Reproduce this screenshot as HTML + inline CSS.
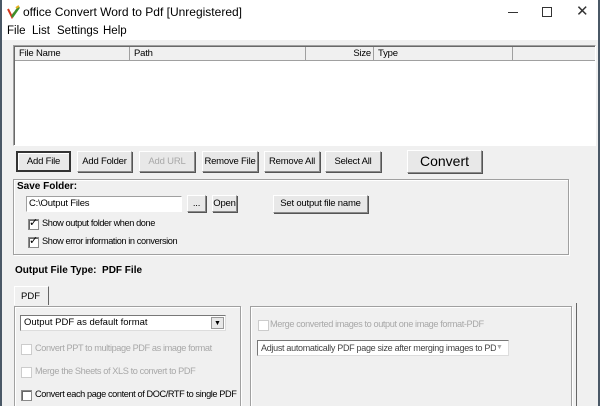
<!DOCTYPE html><html><head><style>
*{margin:0;padding:0;box-sizing:border-box}
html,body{width:600px;height:406px;overflow:hidden}
body{background:#f0f0f0;font-family:"Liberation Sans",sans-serif;font-size:9.5px;color:#000;position:relative;white-space:nowrap}
.a{position:absolute}
.btn{position:absolute;background:#e8e8e8;border:1px solid;border-color:#fff #8a8a8a #8a8a8a #fff;box-shadow:1px 1px 0 #555;text-align:center;font-size:9.5px;line-height:19px;letter-spacing:-0.2px;white-space:nowrap;overflow:hidden}
.grp{position:absolute;border:1px solid #a0a0a0;box-shadow:inset 1px 1px 0 #fff,1px 1px 0 #fff}
.cb{position:absolute;width:11px;height:11px;border:1px solid #8a8a8a;background:#fff;box-shadow:inset 1px 1px 0 #666}
.cbt{position:absolute;font-size:9.2px;letter-spacing:-0.4px}
.dis{color:#a8a8a8}
.hd{position:absolute;top:0;height:14px;border-right:1px solid #a0a0a0;font-size:9.5px;line-height:14px;padding-left:4px;letter-spacing:-0.2px}
</style></head><body>
<div class="a" style="left:0;top:0;width:600px;height:40px;background:#fff"></div>
<div class="a" style="left:0;top:0;width:2px;height:406px;background:#4a5866"></div>
<div class="a" style="left:598px;top:0;width:2px;height:406px;background:#4a5866"></div>
<svg class="a" style="left:7px;top:5px" width="14" height="14"><path d="M1 4 L5 12 L7 8" stroke="#d4381c" stroke-width="2" fill="none"/><path d="M5 12 L12 2" stroke="#3f8f2a" stroke-width="2.5" fill="none"/><path d="M9 3 L12 1" stroke="#e8b020" stroke-width="2"/></svg>
<div class="a" style="left:23px;top:5px;font-size:12px">office Convert Word to Pdf [Unregistered]</div>
<div class="a" style="left:508px;top:12px;width:10px;height:1px;background:#333"></div>
<div class="a" style="left:542px;top:7px;width:10px;height:10px;border:1px solid #333"></div>
<div class="a" style="left:576px;top:2px;font-size:15px;color:#333">✕</div>
<div class="a" style="left:7px;top:25px;font-size:11.5px">File</div>
<div class="a" style="left:32px;top:25px;font-size:11.5px">List</div>
<div class="a" style="left:57px;top:25px;font-size:11.5px">Settings</div>
<div class="a" style="left:103px;top:25px;font-size:11.5px">Help</div>
<div class="a" style="left:13px;top:45px;width:583px;height:101px;background:#fff;border:1px solid;border-color:#a0a0a0 #fff #fff #a0a0a0;box-shadow:inset 1px 1px 0 #696969">
<div class="a" style="left:1px;top:1px;width:580px;height:14px;background:#f0f0f0;border-bottom:1px solid #a0a0a0">
<div class="hd" style="left:0;width:115px">File Name</div>
<div class="hd" style="left:115px;width:176px">Path</div>
<div class="hd" style="left:291px;width:68px;text-align:right;padding-right:2px">Size</div>
<div class="hd" style="left:359px;width:139px">Type</div>
</div></div>
<div class="btn" style="left:16px;top:151px;width:55px;height:21px;border:2px solid #333;line-height:17px;box-shadow:inset 1px 1px 0 #fff">Add File</div>
<div class="btn" style="left:77px;top:151px;width:55px;height:21px">Add Folder</div>
<div class="btn dis" style="left:139px;top:151px;width:56px;height:21px">Add URL</div>
<div class="btn" style="left:202px;top:151px;width:56px;height:21px">Remove File</div>
<div class="btn" style="left:264px;top:151px;width:56px;height:21px">Remove All</div>
<div class="btn" style="left:325px;top:151px;width:56px;height:21px">Select All</div>
<div class="btn" style="left:407px;top:150px;width:75px;height:23px;font-size:14px;line-height:21px;letter-spacing:0">Convert</div>
<div class="grp" style="left:13px;top:179px;width:556px;height:76px"></div>
<div class="a" style="left:17px;top:181px;font-weight:bold;font-size:10px">Save Folder:</div>
<div class="a" style="left:26px;top:196px;width:156px;height:16px;background:#fff;border:1px solid;border-color:#a0a0a0 #fff #fff #a0a0a0;font-size:9.5px;padding-left:2px;line-height:14px;letter-spacing:-0.2px">C:\Output Files</div>
<div class="btn" style="left:187px;top:195px;width:19px;height:17px;line-height:15px">...</div>
<div class="btn" style="left:212px;top:195px;width:25px;height:17px;line-height:15px">Open</div>
<div class="btn" style="left:273px;top:195px;width:95px;height:18px;line-height:16px">Set output file name</div>
<div class="cb" style="left:28px;top:219px"></div><div class="a" style="left:29px;top:216px;font-size:11px">✓</div>
<div class="cbt" style="left:42px;top:218px">Show output folder when done</div>
<div class="cb" style="left:28px;top:237px"></div><div class="a" style="left:29px;top:234px;font-size:11px">✓</div>
<div class="cbt" style="left:42px;top:236px">Show error information in conversion</div>
<div class="a" style="left:15px;top:265px;font-weight:bold;font-size:10px">Output File Type:&nbsp; PDF File</div>
<div class="a" style="left:14px;top:286px;width:35px;height:19px;border-right:1px solid #666;border-left:1px solid #fff;border-top:1px solid #fff;font-size:9.5px;padding:4px 0 0 6px">PDF</div>
<div class="grp" style="left:14px;top:306px;width:227px;height:120px"></div>
<div class="a" style="left:20px;top:315px;width:206px;height:16px;background:#fff;border:1px solid;border-color:#777 #ddd #ddd #777;font-size:9.5px;line-height:14px;padding-left:3px">Output PDF as default format
<div class="a" style="right:1px;top:1px;width:13px;height:12px;background:#e8e8e8;border:1px solid #999;font-size:7px;text-align:center;line-height:11px">▼</div></div>
<div class="cb" style="left:21px;top:344px;box-shadow:none;border-color:#ccc"></div><div class="cbt dis" style="left:35px;top:343px">Convert PPT to multipage PDF as image format</div>
<div class="cb" style="left:21px;top:367px;box-shadow:none;border-color:#ccc"></div><div class="cbt dis" style="left:35px;top:366px">Merge the Sheets of XLS to convert to PDF</div>
<div class="cb" style="left:21px;top:390px"></div><div class="cbt" style="left:35px;top:389px">Convert each page content of DOC/RTF to single PDF</div>
<div class="grp" style="left:250px;top:306px;width:322px;height:120px"></div>
<div class="a" style="left:576px;top:303px;width:1px;height:103px;background:#666"></div>
<div class="cb" style="left:258px;top:320px;box-shadow:none;border-color:#ccc"></div><div class="cbt dis" style="left:270px;top:319px">Merge converted images to output one image format-PDF</div>
<div class="a" style="left:257px;top:340px;width:252px;height:16px;background:#fff;border:1px solid;border-color:#777 #ddd #ddd #777;font-size:9px;line-height:14px;padding-left:3px;color:#444;letter-spacing:-0.3px;overflow:hidden">Adjust automatically PDF page size after merging images to PDF
<div class="a" style="right:1px;top:1px;width:11px;height:12px;font-size:7px;color:#aaa;line-height:12px;background:#fff">▼</div></div>
</body></html>
